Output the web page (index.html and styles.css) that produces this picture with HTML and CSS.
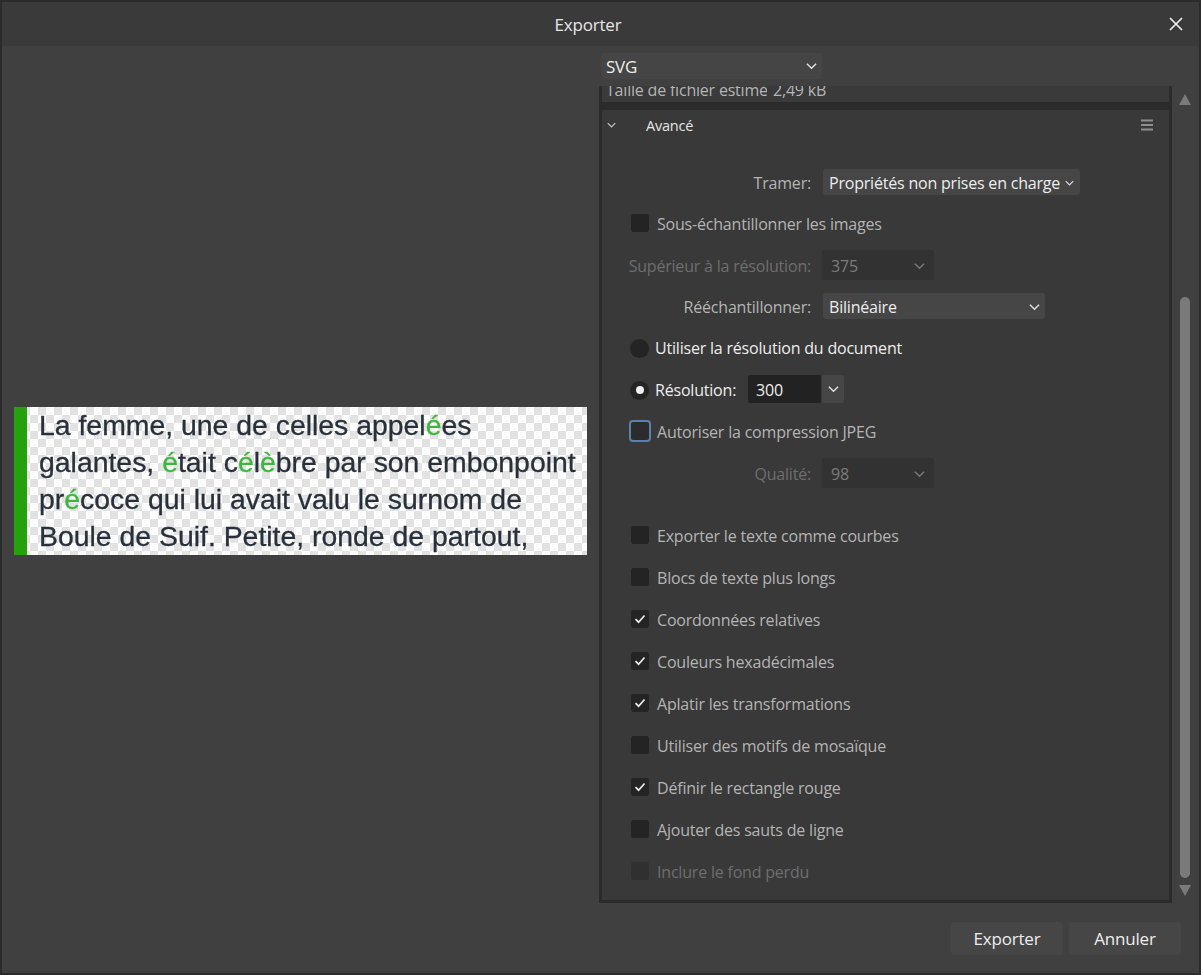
FILE: index.html
```html
<!DOCTYPE html>
<html lang="fr">
<head>
<meta charset="utf-8">
<title>Exporter</title>
<link rel="stylesheet" href="styles.css">
</head>
<body>
<svg class="defs" width="0" height="0" aria-hidden="true">
  <symbol id="chev" viewBox="0 0 12 8"><path d="M1 1.500 6 6.500 11 1.500" fill="none" stroke="currentColor" stroke-width="1.6"/></symbol>
  <symbol id="tick" viewBox="0 0 12 10"><path d="M1.5 5.2 4.6 8.2 10.5 1.5" fill="none" stroke="currentColor" stroke-width="1.7"/></symbol>
</svg>
<div class="window">
  <header class="titlebar">
    <span class="title">Exporter</span>
    <svg class="close" viewBox="0 0 14 14"><path d="M1 1 13 13M13 1 1 13" stroke="#f0f0f0" stroke-width="1.7" fill="none"/></svg>
  </header>
  <div class="main">
    <section class="preview">
      <div class="sheet">
        <div class="bar"></div>
        <p class="sample">La femme, une de celles appel<span class="g">é</span>es<br>galantes, <span class="g">é</span>tait c<span class="g">é</span>l<span class="g">è</span>bre par son embonpoint<br>pr<span class="g">é</span>coce qui lui avait valu le surnom de<br>Boule de Suif. Petite, ronde de partout,</p>
      </div>
    </section>
    <section class="side">
      <div class="format">
        <div class="select sel-format"><span>SVG</span><svg class="chev"><use href="#chev"/></svg></div>
      </div>
      <div class="scrollwrap">
        <div class="panel">
          <div class="estimate"><span class="est-label">Taille de fichier estimée</span><span>2,49 kB</span></div>
          <div class="advanced">
            <div class="adv-head">
              <svg class="chev small"><use href="#chev"/></svg>
              <span class="adv-title">Avancé</span>
              <svg class="menu" viewBox="0 0 12 12"><path d="M0 1.500h12M0 6h12M0 10.500h12" stroke="#8f8f8f" stroke-width="2"/></svg>
            </div>
            <div class="rows">
              <div class="row"><label class="lbl">Tramer:</label><div class="select sel-tramer bright"><span>Propriétés non prises en charge</span><svg class="chev small"><use href="#chev"/></svg></div></div>
              <div class="row check pull"><span class="box"></span><span>Sous-échantillonner les images</span></div>
              <div class="row"><label class="lbl off">Supérieur à la résolution:</label><div class="select sel-off off"><span>375</span><svg class="chev"><use href="#chev"/></svg></div></div>
              <div class="row pull"><label class="lbl">Rééchantillonner:</label><div class="select sel-wide bright"><span>Bilinéaire</span><svg class="chev"><use href="#chev"/></svg></div></div>
              <div class="row radio bright pull"><span class="dot"></span><span>Utiliser la résolution du document</span></div>
              <div class="row radio bright"><span class="dot on"></span><span class="res-label">Résolution:</span><span class="input">300</span><span class="spin"><svg class="chev"><use href="#chev"/></svg></span></div>
              <div class="row check"><span class="box focus"></span><span>Autoriser la compression JPEG</span></div>
              <div class="row"><label class="lbl off">Qualité:</label><div class="select sel-off off"><span>98</span><svg class="chev"><use href="#chev"/></svg></div></div>
              <div class="row check spaced"><span class="box"></span><span>Exporter le texte comme courbes</span></div>
              <div class="row check"><span class="box"></span><span>Blocs de texte plus longs</span></div>
              <div class="row check"><span class="box"><svg class="tick"><use href="#tick"/></svg></span><span>Coordonnées relatives</span></div>
              <div class="row check"><span class="box"><svg class="tick"><use href="#tick"/></svg></span><span>Couleurs hexadécimales</span></div>
              <div class="row check"><span class="box"><svg class="tick"><use href="#tick"/></svg></span><span>Aplatir les transformations</span></div>
              <div class="row check"><span class="box"></span><span>Utiliser des motifs de mosaïque</span></div>
              <div class="row check"><span class="box"><svg class="tick"><use href="#tick"/></svg></span><span>Définir le rectangle rouge</span></div>
              <div class="row check"><span class="box"></span><span>Ajouter des sauts de ligne</span></div>
              <div class="row check off"><span class="box dim"></span><span>Inclure le fond perdu</span></div>
            </div>
          </div>
        </div>
        <div class="scrollbar">
          <svg class="arrow" viewBox="0 0 12 12"><path d="M6 1 12 12H0z" fill="#7a7a7a"/></svg>
          <div class="track"><div class="thumb"></div></div>
          <svg class="arrow" viewBox="0 0 12 12"><path d="M6 11 0 0H12z" fill="#7a7a7a"/></svg>
        </div>
      </div>
      <footer class="actions">
        <button class="btn">Exporter</button>
        <button class="btn">Annuler</button>
      </footer>
    </section>
  </div>
</div>
</body>
</html>
```
FILE: styles.css
```css
* { box-sizing: border-box; }
html, body { margin: 0; padding: 0; }
body { background: #2b2b2b; font-family: "Open Sans", "Noto Sans", sans-serif; font-size: 16px; color: #b4b4b4; letter-spacing: -0.2px; }
.defs { position: absolute; }
.window { width: 1201px; height: 975px; border: 2px solid #2b2b2b; background: #404040; display: flex; flex-direction: column; overflow: hidden; }
.titlebar { height: 44px; flex: none; background: #3a3a3a; display: flex; align-items: center; padding: 0 16px 0 5px; }
.title { flex: 1; text-align: center; color: #e6e6e6; font-size: 17px; }
.close { width: 14px; height: 14px; }
.main { flex: 1; display: flex; min-height: 0; }
.preview { width: 597px; flex: none; display: flex; align-items: center; padding: 0 0 58px 12px; }
.sheet { width: 573px; height: 148px; display: flex; background-color: #fff; background-image: conic-gradient(#e3e3e3 25%, #fff 0 50%, #e3e3e3 0 75%, #fff 0); background-size: 16px 16px; overflow: hidden; }
.bar { width: 13px; background: #23a20b; flex: none; }
.sample { margin: 0; padding-left: 12px; font-family: "Liberation Sans", Arial, sans-serif; font-size: 28.4px; line-height: 37px; letter-spacing: 0; color: #28303b; -webkit-text-stroke: 0.3px currentColor; white-space: nowrap; filter: blur(0.65px); }
.g { color: #3cb83c; }
.side { flex: 1; min-width: 0; display: flex; flex-direction: column; }
.format { height: 40px; flex: none; padding: 7px 0 0 2px; }
.select { display: flex; align-items: center; justify-content: space-between; border-radius: 3px; background: #464646; color: #ededed; }
.sel-format { width: 221px; height: 26px; padding: 0 5px; background: #454545; font-size: 17px; }
.chev { width: 11px; height: 8px; color: #e0e0e0; flex: none; }
.chev.small { width: 9px; height: 6px; }
.scrollwrap { height: 817px; flex: none; display: flex; }
.panel { width: 573px; flex: none; background: #2b2b2b; border: solid #2b2b2b; border-width: 0 3px 3px; display: flex; flex-direction: column; overflow: hidden; }
.estimate { height: 16px; flex: none; background: #3a3a3a; display: flex; gap: 6px; padding-left: 4px; align-items: center; line-height: 16px; overflow: hidden; }
.estimate span { margin-top: -8px; white-space: nowrap; }
.est-label { width: 161px; overflow: hidden; display: block; }
.advanced { margin-top: 8px; flex: 1; background: #393939; border-radius: 2px 2px 0 0; }
.adv-head { height: 30px; display: flex; align-items: center; padding: 0 16px 0 5px; }
.adv-head .chev { color: #c4c4c4; }
.adv-title { flex: 1; margin-left: 30px; color: #e6e6e6; font-size: 14.5px; }
.menu { width: 12px; height: 12px; }
.rows { padding-top: 22px; display: flex; flex-direction: column; }
.row { height: 42px; flex: none; display: flex; align-items: center; white-space: nowrap; }
.row.pull { margin-top: -1px; }
.row.spaced { margin-top: 20px; }
.row .select { margin-bottom: 2px; padding-top: 2px; }
.lbl { width: 209px; text-align: right; margin-right: 12px; flex: none; }
.off { color: #6e6e6e; }
.bright { color: #ededed; }
.select.off { color: #7c7c7c; }
.sel-tramer { width: 257px; height: 26px; padding: 0 6px 0 6px; }
.sel-off { width: 112px; height: 30px; margin-left: -1px; padding: 0 9px; background: #323232; }
.sel-off .chev { color: #787878; }
.sel-wide { width: 222px; height: 26px; padding: 0 5px 0 6px; }
.check { padding-left: 29px; gap: 8px; }
.box { width: 18px; height: 18px; margin-bottom: 2px; background: #242424; border-radius: 3px; display: flex; align-items: center; justify-content: center; flex: none; }
.box.focus { width: 22px; height: 22px; margin: 0 -2px 2px; border: 2px solid #5d80a8; background: #2c2c2c; border-radius: 4px; }
.box.dim { background: #303030; }
.tick { width: 12px; height: 10px; color: #ececec; }
.radio { padding-left: 28px; gap: 6px; }
.dot { width: 19px; height: 19px; border-radius: 50%; background: #242424; flex: none; display: flex; align-items: center; justify-content: center; }
.dot.on::after { content: ""; width: 8px; height: 8px; border-radius: 50%; background: #eee; }
.res-label { width: 81px; margin-right: 6px; }
.input { width: 73px; height: 28px; margin-bottom: 2px; padding: 2px 0 0 8px; background: #222; display: flex; align-items: center; border-radius: 2px; }
.spin { width: 22px; height: 28px; margin: 0 0 2px -5px; background: #464646; display: flex; align-items: center; justify-content: center; border-radius: 2px; }
.scrollbar { flex: 1; width: 27px; padding: 7px 0 6px; display: flex; flex-direction: column; align-items: center; }
.arrow { width: 12px; height: 12px; margin-left: -1px; flex: none; }
.track { flex: 1; width: 100%; display: flex; flex-direction: column; justify-content: flex-end; align-items: center; padding: 0 0 7px; }
.thumb { width: 10px; height: 581px; margin-left: -1px; background: #7a7a7a; border-radius: 5px; }
.actions { flex: 1; display: flex; justify-content: flex-end; gap: 6px; padding: 19px 18px 0 0; }
.btn { width: 112px; height: 33px; background: #464646; border: 0; border-radius: 3px; color: #ededed; font: inherit; font-size: 17px; letter-spacing: -0.2px; padding: 0; }
```
